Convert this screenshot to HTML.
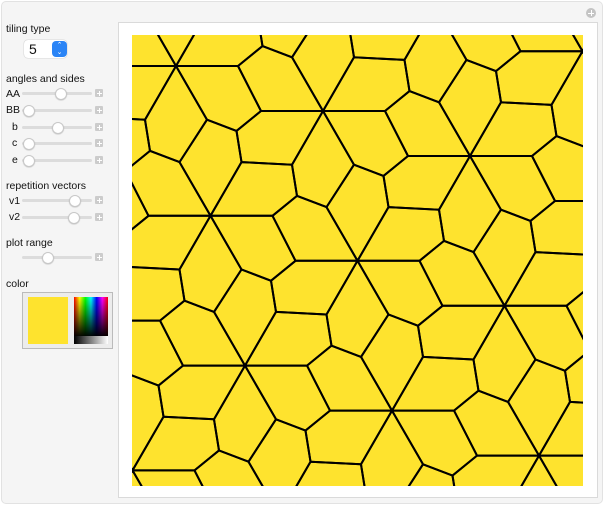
<!DOCTYPE html>
<html><head><meta charset="utf-8"><style>
html,body{margin:0;width:604px;height:506px;overflow:hidden}
body{background:#fff;font-family:"Liberation Sans",sans-serif;font-size:10.5px;color:#111;position:relative}
.outer{position:absolute;left:1px;top:1px;width:600px;height:501px;background:#f5f5f5;border:1px solid #e2e2e2;border-radius:5px}
.lbl{position:absolute;font-size:10.5px}
.track{position:absolute;left:22px;width:70px;height:3px;background:#dcdcdc;border-radius:2px}
.thumb{position:absolute;width:10px;height:10px;border-radius:50%;background:#fff;border:1px solid #c8c8c8;box-shadow:0 0.5px 1px rgba(0,0,0,.2)}
.plus{position:absolute;left:95px;width:8px;height:8px;background:#ccc;border-radius:1px}
.plus:before{content:"";position:absolute;left:1.5px;top:3.5px;width:5px;height:1px;background:#fff}
.plus:after{content:"";position:absolute;left:3.5px;top:1.5px;width:1px;height:5px;background:#fff}
svg{display:block}
</style></head><body>
<div class="outer"></div>
<div class="lbl" style="left:6px;top:23px">tiling type</div>
<div style="position:absolute;left:24px;top:40px;width:43px;height:18px;background:#fff;border-radius:4px;box-shadow:0 0 1px rgba(0,0,0,.4)"></div>
<div style="position:absolute;left:29px;top:41px;font-size:14px">5</div>
<div style="position:absolute;left:52px;top:41px;width:15px;height:16px;background:#2a84f6;border-radius:4px;color:#fff;font-size:7px;line-height:7px;text-align:center;padding-top:1px;box-sizing:border-box">&#8963;<br>&#8964;</div>
<div class="lbl" style="left:6px;top:73px">angles and sides</div>
<div class="lbl" style="left:6px;top:88px">AA</div>
<div class="lbl" style="left:6px;top:104px">BB</div>
<div class="lbl" style="left:12px;top:121px">b</div>
<div class="lbl" style="left:12px;top:137px">c</div>
<div class="lbl" style="left:12px;top:154px">e</div>
<div class="track" style="top:92px"></div><div class="thumb" style="left:55px;top:88px"></div><div class="plus" style="top:89px"></div>
<div class="track" style="top:109px"></div><div class="thumb" style="left:23px;top:105px"></div><div class="plus" style="top:106px"></div>
<div class="track" style="top:126px"></div><div class="thumb" style="left:52px;top:122px"></div><div class="plus" style="top:123px"></div>
<div class="track" style="top:142px"></div><div class="thumb" style="left:23px;top:138px"></div><div class="plus" style="top:139px"></div>
<div class="track" style="top:159px"></div><div class="thumb" style="left:23px;top:155px"></div><div class="plus" style="top:156px"></div>
<div class="lbl" style="left:6px;top:180px">repetition vectors</div>
<div class="lbl" style="left:9px;top:195px">v1</div>
<div class="lbl" style="left:9px;top:211px">v2</div>
<div class="track" style="top:199px"></div><div class="thumb" style="left:69px;top:195px"></div><div class="plus" style="top:196px"></div>
<div class="track" style="top:216px"></div><div class="thumb" style="left:68px;top:212px"></div><div class="plus" style="top:213px"></div>
<div class="lbl" style="left:6px;top:237px">plot range</div>
<div class="track" style="top:256px"></div><div class="thumb" style="left:42px;top:252px"></div><div class="plus" style="top:253px"></div>
<div class="lbl" style="left:6px;top:278px">color</div>
<div style="position:absolute;left:22px;top:292px;width:91px;height:57px;background:#ececec;border:1px solid #bbb;box-sizing:border-box"></div>
<div style="position:absolute;left:28px;top:297px;width:40px;height:47px;background:#fee32e"></div>
<div style="position:absolute;left:74px;top:297px;width:34px;height:47px;background:linear-gradient(to bottom,rgba(0,0,0,0),#000 85%),linear-gradient(to right,#f00,#ff0,#0f0,#0ff,#00f,#f0f,#f00)"></div>
<div style="position:absolute;left:74px;top:336px;width:34px;height:8px;background:linear-gradient(to right,#000,#fff)"></div>
<div style="position:absolute;left:118px;top:22px;width:480px;height:476px;background:#fff;border:1px solid #dadada;box-sizing:border-box"></div>
<div style="position:absolute;left:586px;top:8px;width:10px;height:10px;border-radius:50%;background:#c4c4c4"></div>
<div style="position:absolute;left:590.5px;top:10px;width:1px;height:6px;background:#fff"></div>
<div style="position:absolute;left:588px;top:12.5px;width:6px;height:1px;background:#fff"></div>
<svg style="position:absolute;left:0;top:0" width="604" height="506">
<defs>
<clipPath id="cp"><rect x="132" y="35" width="451" height="451"/></clipPath>
<polygon id="pt" points="0,0 62,0 85,45 60.5,64.9 31,53.7" fill="none" stroke="#000" stroke-width="2" stroke-linejoin="round"/>
<g id="hex">
<use href="#pt"/><use href="#pt" transform="rotate(60)"/><use href="#pt" transform="rotate(120)"/>
<use href="#pt" transform="rotate(180)"/><use href="#pt" transform="rotate(240)"/><use href="#pt" transform="rotate(300)"/>
</g>
<g id="row">
<use href="#hex" transform="translate(-441,-135)"/><use href="#hex" transform="translate(-294,-90)"/>
<use href="#hex" transform="translate(-147,-45)"/><use href="#hex"/>
<use href="#hex" transform="translate(147,45)"/><use href="#hex" transform="translate(294,90)"/>
<use href="#hex" transform="translate(441,135)"/><use href="#hex" transform="translate(588,180)"/>
</g>
</defs>
<rect x="132" y="35" width="451" height="451" fill="#fee32e"/>
<g clip-path="url(#cp)">
<g transform="translate(176,66)">
<use href="#row" transform="translate(-69,-299.6)"/>
<use href="#row" transform="translate(-34.5,-149.8)"/>
<use href="#row"/>
<use href="#row" transform="translate(34.5,149.8)"/>
<use href="#row" transform="translate(69,299.6)"/>
<use href="#row" transform="translate(103.5,449.4)"/>
<use href="#row" transform="translate(138,599.2)"/>
</g>
</g>
</svg>
</body></html>
